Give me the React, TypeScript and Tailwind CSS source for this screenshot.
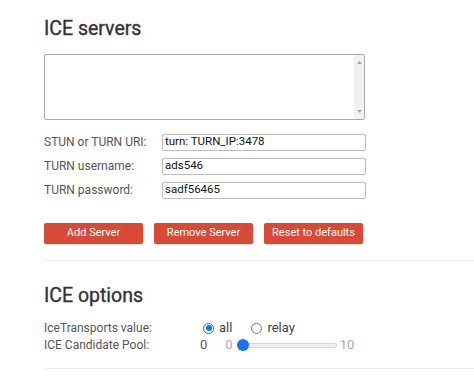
import React from 'react';

const font = { fontFamily: 'Roboto, "Liberation Sans", sans-serif' };

function Field({ label, value }: { label: string; value: string }) {
  return (
    <div className="flex items-center h-[16px] mb-[8px]">
      <span className="w-[118px] text-[12px] text-[#555]">{label}</span>
      <input
        readOnly
        value={value}
        className="w-[204px] h-[17px] border border-[#bbb] rounded-[2px] px-[2px] text-[11.5px] text-[#111] outline-none"
      />
    </div>
  );
}

function RedButton({ children }: { children: React.ReactNode }) {
  return (
    <button className="w-[99px] h-[21px] rounded-[2px] bg-[#d84a38] text-white text-[11px] font-normal shadow-[0_1px_1px_rgba(0,0,0,0.15)]">
      {children}
    </button>
  );
}

export default function App() {
  return (
    <div className="w-[474px] h-[376px] bg-white overflow-hidden" style={font}>
      <section className="pl-[44px] pt-[17px]">
        <h2 className="text-[19.5px] font-normal text-[#333] leading-[24px] mb-[13px] [-webkit-text-stroke:0.35px_#333]">ICE servers</h2>
        <div className="w-[321px] h-[66px] border border-[#aaa] rounded-[2px] flex justify-end mb-[14px]">
          <div className="w-[10px] h-full bg-[#f1f1f1] flex flex-col justify-between items-center py-[6px]">
            <svg width="5" height="3" viewBox="0 0 5 3"><path d="M0 3 L2.5 0 L5 3Z" fill="#a3a3a3" /></svg>
            <svg width="5" height="3" viewBox="0 0 5 3"><path d="M0 0 L2.5 3 L5 0Z" fill="#a3a3a3" /></svg>
          </div>
        </div>
        <Field label="STUN or TURN URI:" value="turn: TURN_IP:3478" />
        <Field label="TURN username:" value="ads546" />
        <Field label="TURN password:" value="sadf56465" />
        <div className="flex gap-[11px] mt-[25px]">
          <RedButton>Add Server</RedButton>
          <RedButton>Remove Server</RedButton>
          <RedButton>Reset to defaults</RedButton>
        </div>
        <div className="mt-[16px] border-t border-[#eee]" />
      </section>
      <section className="pl-[44px] pt-[23px]">
        <h2 className="text-[19.5px] font-normal text-[#333] leading-[24px] mb-[11px] [-webkit-text-stroke:0.35px_#333]">ICE options</h2>
        <div className="flex items-center h-[18px] text-[12px] text-[#555]">
          <span className="w-[159px]">IceTransports value:</span>
          <span className="flex items-center gap-[5px] text-[13px]">
            <span className="w-[11px] h-[11px] rounded-full border border-[#1a73e8] flex items-center justify-center">
              <span className="w-[6px] h-[6px] rounded-full bg-[#1a73e8]" />
            </span>
            <span className="text-[#444]">all</span>
          </span>
          <span className="flex items-center gap-[5px] ml-[19px] text-[13px]">
            <span className="w-[11px] h-[11px] rounded-full border border-[#777]" />
            <span className="text-[#444]">relay</span>
          </span>
        </div>
        <div className="flex items-center h-[16px] text-[12px] text-[#555]">
          <span className="w-[156px]">ICE Candidate Pool:</span>
          <span className="text-[#555] text-[13px]">0</span>
          <span className="ml-[18px] text-[#aaa] text-[13px]">0</span>
          <span className="relative ml-[4px] w-[100px] h-[12px] flex items-center">
            <span className="w-full h-[5px] rounded-full bg-[#efefef] border border-[#d4d4d4]" />
            <span className="absolute left-0 w-[12px] h-[12px] rounded-full bg-[#1a73e8]" />
          </span>
          <span className="ml-[3px] text-[#aaa] text-[13px]">10</span>
        </div>
        <div className="mt-[15px] border-t border-[#eee]" />
      </section>
    </div>
  );
}
